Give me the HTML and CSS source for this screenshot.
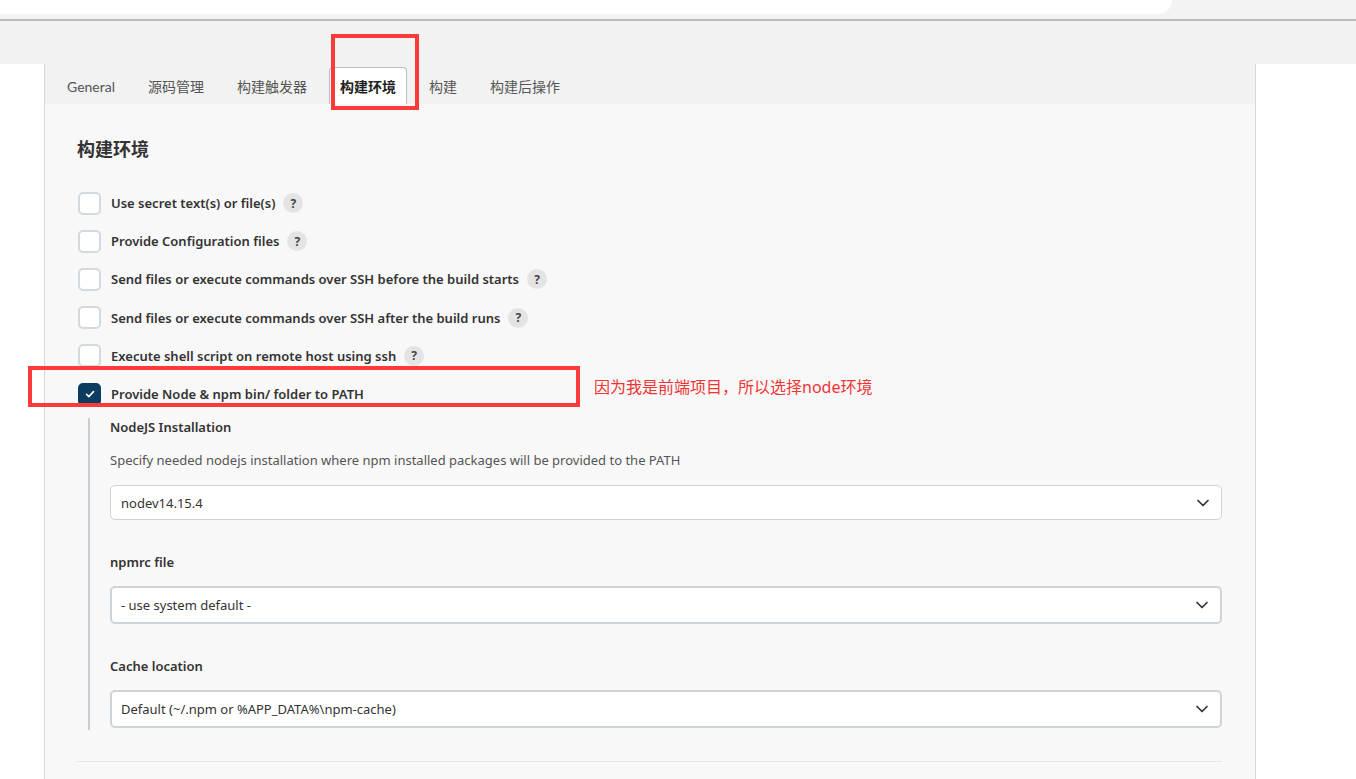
FILE: index.html
```html
<!DOCTYPE html>
<html lang="zh-CN">
<head>
    <meta charset="UTF-8">
    <title>构建环境</title>
    <link rel="stylesheet" href="styles.css">
</head>
<body>
    <div class="chrome">
        <div class="chrome-top">
            <div class="address"></div>
            <div class="chrome-right"></div>
        </div>
        <div class="chrome-strip"></div>
    </div>
    <div class="page-head"></div>

    <div class="page">
        <div class="side side-left"></div>
        <div class="panel">
            <div class="tabs">
                <span class="tab">General</span>
                <span class="tab">源码管理</span>
                <span class="tab">构建触发器</span>
                <span class="tab active">构建环境</span>
                <span class="tab">构建</span>
                <span class="tab">构建后操作</span>
            </div>

            <div class="section">
                <h2 class="section-title">构建环境</h2>

                <div class="option">
                    <span class="checkbox"></span>
                    <span class="option-label">Use secret text(s) or file(s)</span>
                    <span class="help">?</span>
                </div>
                <div class="option">
                    <span class="checkbox"></span>
                    <span class="option-label">Provide Configuration files</span>
                    <span class="help">?</span>
                </div>
                <div class="option">
                    <span class="checkbox"></span>
                    <span class="option-label">Send files or execute commands over SSH before the build starts</span>
                    <span class="help">?</span>
                </div>
                <div class="option">
                    <span class="checkbox"></span>
                    <span class="option-label">Send files or execute commands over SSH after the build runs</span>
                    <span class="help">?</span>
                </div>
                <div class="option">
                    <span class="checkbox"></span>
                    <span class="option-label">Execute shell script on remote host using ssh</span>
                    <span class="help">?</span>
                </div>
                <div class="option">
                    <span class="checkbox checked">
                        <svg width="12" height="12" viewBox="0 0 12 12"><path d="M2.5 6.3l2.3 2.3 4.7-5" fill="none" stroke="#fff" stroke-width="1.6" stroke-linecap="round" stroke-linejoin="round"/></svg>
                    </span>
                    <span class="option-label">Provide Node &amp; npm bin/ folder to PATH</span>
                </div>

                <div class="nested">
                    <div class="field">
                        <div class="field-label">NodeJS Installation</div>
                        <div class="field-desc">Specify needed nodejs installation where npm installed packages will be provided to the PATH</div>
                        <div class="select thin">
                            <span>nodev14.15.4</span>
                            <svg class="chevron" width="14" height="14" viewBox="0 0 14 14"><path d="M2 4.5l5 5 5-5" fill="none" stroke="#333" stroke-width="1.7" stroke-linecap="round" stroke-linejoin="round"/></svg>
                        </div>
                    </div>
                    <div class="field">
                        <div class="field-label">npmrc file</div>
                        <div class="select">
                            <span>- use system default -</span>
                            <svg class="chevron" width="14" height="14" viewBox="0 0 14 14"><path d="M2 4.5l5 5 5-5" fill="none" stroke="#333" stroke-width="1.7" stroke-linecap="round" stroke-linejoin="round"/></svg>
                        </div>
                    </div>
                    <div class="field">
                        <div class="field-label">Cache location</div>
                        <div class="select">
                            <span>Default (~/.npm or %APP_DATA%\npm-cache)</span>
                            <svg class="chevron" width="14" height="14" viewBox="0 0 14 14"><path d="M2 4.5l5 5 5-5" fill="none" stroke="#333" stroke-width="1.7" stroke-linecap="round" stroke-linejoin="round"/></svg>
                        </div>
                    </div>
                </div>

                <div class="divider"></div>
            </div>
        </div>
        <div class="side"></div>
    </div>

    <!-- screenshot annotations -->
    <div class="mark mark-tab"></div>
    <div class="mark mark-node"></div>
    <div class="note">因为我是前端项目，所以选择node环境</div>
</body>
</html>
```

FILE: styles.css
```css
body {
    margin: 0;
    font-family: "Noto Sans", "Noto Sans CJK SC", sans-serif;
    color: #333;
    background: #fff;
    overflow: hidden;
}
.chrome-top {
    display: flex;
    height: 14px;
    background: #f3f3f3;
}
.address {
    width: 1172px;
    background: #fff;
    border-bottom-right-radius: 14px;
}
.chrome-right {
    flex: 1;
}
.chrome-strip {
    height: 5px;
    background: #f3f3f3;
    border-bottom: 2px solid #bdbdbd;
}
.page-head {
    height: 43px;
    background: #f2f2f2;
}
.page {
    display: flex;
}
.side {
    flex: 1;
    background: #fff;
}
.side-left {
    flex: none;
    width: 44px;
}
.panel {
    width: 1210px;
    border-left: 1px solid #d3d8dc;
    border-right: 1px solid #d3d8dc;
    background: #f8f8f8;
    height: 715px;
}
.tabs {
    display: flex;
    align-items: flex-end;
    height: 40px;
    background: #f2f2f2;
    padding-left: 11px;
}
.tab {
    font-family: "Lato", "Noto Sans CJK SC", sans-serif;
    font-size: 14px;
    color: #555;
    padding: 0 10px;
    height: 37px;
    line-height: 37px;
    box-sizing: border-box;
    border: 1px solid transparent;
    border-bottom: none;
    margin-right: 11px;
}
.tab.active {
    background: #fff;
    color: #222;
    font-weight: 700;
    border-color: #b8bfc5;
    border-radius: 4px 4px 0 0;
}
.section {
    padding: 33px 33px 0 32px;
}
.section-title {
    margin: 0 0 23px 0;
    font-size: 18px;
    line-height: 24px;
    font-weight: 700;
    color: #333;
}
.option {
    display: flex;
    align-items: center;
    height: 38.2px;
}
.checkbox {
    width: 19px;
    height: 19px;
    border: 2px solid #d4d9dd;
    border-radius: 5px;
    background: #fff;
    margin-left: 1px;
    margin-right: 10px;
    display: flex;
    align-items: center;
    justify-content: center;
}
.checkbox.checked {
    background: #0d3c61;
    border-color: #0d3c61;
}
.option-label {
    font-size: 13px;
    font-weight: 600;
    color: #333;
}
.help {
    width: 20px;
    height: 20px;
    border-radius: 50%;
    background: #e4e4e4;
    margin-left: 8px;
    font-size: 12px;
    font-weight: 700;
    color: #444;
    display: flex;
    align-items: center;
    justify-content: center;
}
.nested {
    margin-left: 11px;
    border-left: 2px solid #c9ced2;
    padding-left: 20px;
    margin-top: 5px;
}
.field {
    padding-bottom: 33px;
}
.field:last-child {
    padding-bottom: 2px;
}
.field-label {
    font-size: 13px;
    font-weight: 600;
    line-height: 18px;
    margin-bottom: 15px;
}
.field-desc {
    font-size: 13px;
    color: #555;
    line-height: 18px;
    margin-top: 1px;
    margin-bottom: 16px;
}
.select {
    display: flex;
    align-items: center;
    justify-content: space-between;
    height: 38px;
    box-sizing: border-box;
    background: #fff;
    border: 2px solid #cdd3d7;
    border-radius: 5px;
    padding: 0 11px 0 9px;
    font-size: 13px;
    color: #333;
}
.select.thin {
    height: 35px;
    border-width: 1px;
    padding-left: 10px;
}
.chevron {
    flex: none;
}
.divider {
    margin-top: 31px;
    height: 1px;
    background: #e6e6e6;
}
.mark {
    position: absolute;
    border: 4px solid #fc3a3a;
}
.mark-tab {
    left: 331px;
    top: 34px;
    width: 80px;
    height: 68px;
}
.mark-node {
    left: 28px;
    top: 366px;
    width: 544px;
    height: 33px;
}
.note {
    position: absolute;
    left: 594px;
    top: 375px;
    font-size: 16px;
    line-height: 24px;
    color: #f03434;
}
```
